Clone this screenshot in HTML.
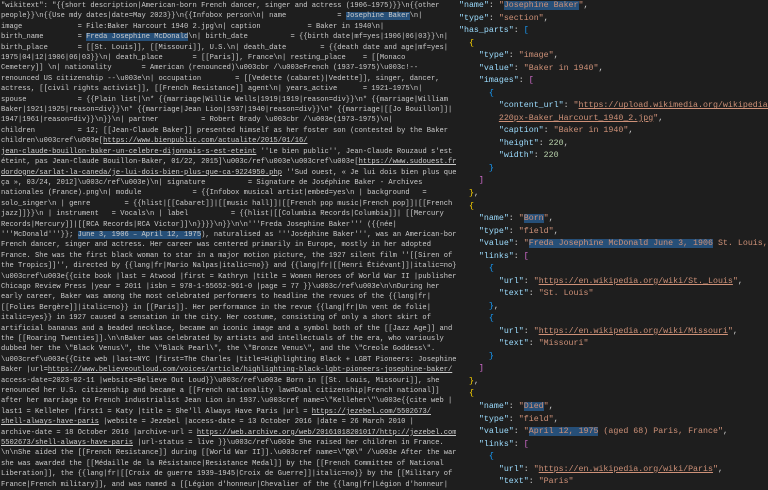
<!DOCTYPE html>
<html><head><meta charset="utf-8">
<style>
html,body{margin:0;padding:0;background:#1e1e1e;width:768px;height:489px;overflow:hidden;}
#L{position:absolute;left:1px;top:1px;width:455px;height:489px;overflow:hidden;
 font-family:"Liberation Mono",monospace;font-size:7.1px;line-height:10.4px;white-space:pre;color:#cccccc;}
#R{position:absolute;left:459px;top:0;width:309px;height:489px;overflow:hidden;
 font-family:"Liberation Mono",monospace;font-size:8.3px;line-height:12.53px;white-space:pre;color:#d4d4d4;}
.h{background:#264f78;}
.u{text-decoration:underline;}
.k{color:#9cdcfe}.s{color:#ce9178}.n{color:#b5cea8}
.b1{color:#179fff}.b2{color:#ffd700}.b3{color:#da70d6}
</style></head><body>
<div id="L">"wikitext": "{{short description|American-born French dancer, singer and actress (1906–1975)}}\n{{other
people}}\n{{Use mdy dates|date=May 2023}}\n{{Infobox person\n| name            = <span class="h">Josephine Baker</span>\n|
image             = File:Baker Harcourt 1940 2.jpg\n| caption           = Baker in 1940\n|
birth_name        = <span class="h">Freda Josephine McDonald</span>\n| birth_date          = {{birth date|mf=yes|1906|06|03}}\n|
birth_place       = [[St. Louis]], [[Missouri]], U.S.\n| death_date        = {{death date and age|mf=yes|
1975|04|12|1906|06|03}}\n| death_place       = [[Paris]], France\n| resting_place    = [[Monaco
Cemetery]] \n| nationality       = American (renounced)\u003cbr /\u003eFrench (1937–1975)\u003c!--
renounced US citizenship --\u003e\n| occupation        = [[Vedette (cabaret)|Vedette]], singer, dancer,
actress, [[civil rights activist]], [[French Resistance]] agent\n| years_active      = 1921–1975\n|
spouse            = {{Plain list|\n* {{marriage|Willie Wells|1919|1919|reason=div}}\n* {{marriage|William
Baker|1921|1925|reason=div}}\n* {{marriage|Jean Lion|1937|1940|reason=div}}\n* {{marriage|[[Jo Bouillon]]|
1947|1961|reason=div}}\n}}\n| partner          = Robert Brady \u003cbr /\u003e(1973–1975)\n|
children          = 12; [[Jean-Claude Baker]] presented himself as her foster son (contested by the Baker
children\u003cref\u003e[<span class="u">https://www.bienpublic.com/actualite/2015/01/16/</span>
<span class="u">jean-claude-bouillon-baker-un-celebre-dijonnais-s-est-eteint</span> ''Le bien public'', Jean-Claude Rouzaud s'est
éteint, pas Jean-Claude Bouillon-Baker, 01/22, 2015]\u003c/ref\u003e\u003cref\u003e[<span class="u">https://www.sudouest.fr/</span>
<span class="u">dordogne/sarlat-la-caneda/je-lui-dois-bien-plus-que-ca-9224950.php</span> ''Sud ouest, « Je lui dois bien plus que
ça », 03/24, 2012]\u003c/ref\u003e)\n| signature          = Signature de Joséphine Baker - Archives
nationales (France).png\n| module            = {{Infobox musical artist|embed=yes\n | background   =
solo_singer\n | genre        = {{hlist|[[Cabaret]]|[[music hall]]|[[French pop music|French pop]]|[[French
jazz]]}}\n | instrument   = Vocals\n | label          = {{hlist|[[Columbia Records|Columbia]]| [[Mercury
Records|Mercury]]|[[RCA Records|RCA Victor]]\n}}}}\n}}\n\n'''Freda Josephine Baker''' ({{née|
'''McDonald'''}}; <span class="h">June 3, 1906 – April 12, 1975</span>), naturalised as '''Joséphine Baker''', was an American-born
French dancer, singer and actress. Her career was centered primarily in Europe, mostly in her adopted
France. She was the first black woman to star in a major motion picture, the 1927 silent film ''[[Siren of
the Tropics]]'', directed by {{lang|fr|Mario Nalpas|italic=no}} and {{lang|fr|[[Henri Étiévant]]|italic=no}}.
\u003cref\u003e{{cite book |last = Atwood |first = Kathryn |title = Women Heroes of World War II |publisher=
Chicago Review Press |year = 2011 |isbn = 978-1-55652-961-0 |page = 77 }}\u003c/ref\u003e\n\nDuring her
early career, Baker was among the most celebrated performers to headline the revues of the {{lang|fr|
[[Folies Bergère]]|italic=no}} in [[Paris]]. Her performance in the revue {{lang|fr|Un vent de folie|
italic=yes}} in 1927 caused a sensation in the city. Her costume, consisting of only a short skirt of
artificial bananas and a beaded necklace, became an iconic image and a symbol both of the [[Jazz Age]] and
the [[Roaring Twenties]].\n\nBaker was celebrated by artists and intellectuals of the era, who variously
dubbed her the \"Black Venus\", the \"Black Pearl\", the \"Bronze Venus\", and the \"Creole Goddess\".
\u003cref\u003e{{Cite web |last=NYC |first=The Charles |title=Highlighting Black + LGBT Pioneers: Josephine
Baker |url=<span class="u">https://www.believeoutloud.com/voices/article/highlighting-black-lgbt-pioneers-josephine-baker/</span> |
access-date=2023-02-11 |website=Believe Out Loud}}\u003c/ref\u003e Born in [[St. Louis, Missouri]], she
renounced her U.S. citizenship and became a [[French nationality law#Dual citizenship|French national]]
after her marriage to French industrialist Jean Lion in 1937.\u003cref name=\"Kelleher\"\u003e{{cite web |
last1 = Kelleher |first1 = Katy |title = She'll Always Have Paris |url = <span class="u">https://jezebel.com/5502673/</span>
<span class="u">shell-always-have-paris</span> |website = Jezebel |access-date = 13 October 2016 |date = 26 March 2010 |
archive-date = 18 October 2016 |archive-url = <span class="u">https://web.archive.org/web/20161018201017/http://jezebel.com/</span>
<span class="u">5502673/shell-always-have-paris</span> |url-status = live }}\u003c/ref\u003e She raised her children in France.
\n\nShe aided the [[French Resistance]] during [[World War II]].\u003cref name=\"QR\" /\u003e After the war,
she was awarded the [[Médaille de la Résistance|Resistance Medal]] by the [[French Committee of National
Liberation]], the {{lang|fr|[[Croix de guerre 1939–1945|Croix de Guerre]]|italic=no}} by the [[Military of
France|French military]], and was named a [[Légion d'honneur|Chevalier of the {{lang|fr|Légion d'honneur|</div>
<div id="R"><span class="k">"name"</span>: <span class="s">"<span class="h">Josephine Baker</span>"</span>,
<span class="k">"type"</span>: <span class="s">"section"</span>,
<span class="k">"has_parts"</span>: <span class="b1">[</span>
  <span class="b2">{</span>
    <span class="k">"type"</span>: <span class="s">"image"</span>,
    <span class="k">"value"</span>: <span class="s">"Baker in 1940"</span>,
    <span class="k">"images"</span>: <span class="b3">[</span>
      <span class="b1">{</span>
        <span class="k">"content_url"</span>: <span class="s">"<span class="u">https://upload.wikimedia.org/wikipedia/commons/</span></span>
        <span class="s"><span class="u">220px-Baker_Harcourt_1940_2.jpg</span>"</span>,
        <span class="k">"caption"</span>: <span class="s">"Baker in 1940"</span>,
        <span class="k">"height"</span>: <span class="n">220</span>,
        <span class="k">"width"</span>: <span class="n">220</span>
      <span class="b1">}</span>
    <span class="b3">]</span>
  <span class="b2">}</span>,
  <span class="b2">{</span>
    <span class="k">"name"</span>: <span class="s">"<span class="h">Born</span>"</span>,
    <span class="k">"type"</span>: <span class="s">"field"</span>,
    <span class="k">"value"</span>: <span class="s">"<span class="h">Freda Josephine McDonald June 3, 1906</span> St. Louis, Missouri"</span>,
    <span class="k">"links"</span>: <span class="b3">[</span>
      <span class="b1">{</span>
        <span class="k">"url"</span>: <span class="s">"<span class="u">https://en.wikipedia.org/wiki/St._Louis</span>"</span>,
        <span class="k">"text"</span>: <span class="s">"St. Louis"</span>
      <span class="b1">}</span>,
      <span class="b1">{</span>
        <span class="k">"url"</span>: <span class="s">"<span class="u">https://en.wikipedia.org/wiki/Missouri</span>"</span>,
        <span class="k">"text"</span>: <span class="s">"Missouri"</span>
      <span class="b1">}</span>
    <span class="b3">]</span>
  <span class="b2">}</span>,
  <span class="b2">{</span>
    <span class="k">"name"</span>: <span class="s">"<span class="h">Died</span>"</span>,
    <span class="k">"type"</span>: <span class="s">"field"</span>,
    <span class="k">"value"</span>: <span class="s">"<span class="h">April 12, 1975</span> (aged 68) Paris, France"</span>,
    <span class="k">"links"</span>: <span class="b3">[</span>
      <span class="b1">{</span>
        <span class="k">"url"</span>: <span class="s">"<span class="u">https://en.wikipedia.org/wiki/Paris</span>"</span>,
        <span class="k">"text"</span>: <span class="s">"Paris"</span>
</div>
</body></html>
